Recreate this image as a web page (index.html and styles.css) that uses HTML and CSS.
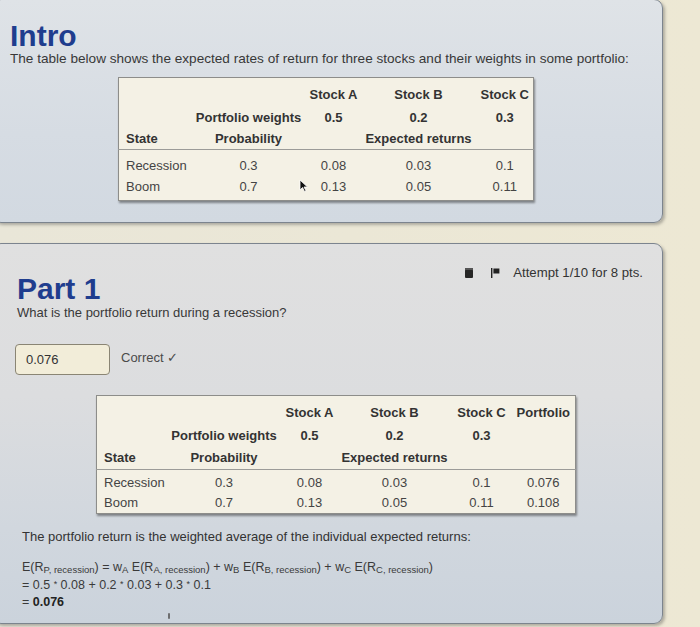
FILE: index.html
```html
<!DOCTYPE html>
<html>
<head>
<meta charset="utf-8">
<link rel="stylesheet" href="styles.css">
</head>
<body>
<div class="page">
  <section class="card card-intro">
    <h2 class="title">Intro</h2>
    <p class="lead">The table below shows the expected rates of return for three stocks and their weights in some portfolio:</p>
    <div class="table-wrap t1">
      <table class="data">
        <colgroup><col style="width:72px"><col style="width:116px"><col style="width:54px"><col style="width:116px"><col style="width:57px"></colgroup>
        <tr class="r1"><th></th><th></th><th>Stock A</th><th>Stock B</th><th>Stock C</th></tr>
        <tr class="r2"><th></th><th>Portfolio weights</th><th>0.5</th><th>0.2</th><th>0.3</th></tr>
        <tr class="r3"><th class="left">State</th><th>Probability</th><th></th><th>Expected returns</th><th></th></tr>
        <tr class="r4"><td class="left">Recession</td><td>0.3</td><td>0.08</td><td>0.03</td><td>0.1</td></tr>
        <tr class="r5"><td class="left">Boom</td><td>0.7</td><td>0.13</td><td>0.05</td><td>0.11</td></tr>
      </table>
      <svg class="cursor" width="9" height="13" viewBox="0 0 9 13"><path d="M1 1 L1 11 L3.5 8.5 L5.5 12.5 L7 11.8 L5 8 L8.5 8 Z" fill="#111" stroke="#fff" stroke-width="0.8"/></svg>
    </div>
  </section>

  <section class="card card-part">
    <div class="part-head">
      <h2 class="title part-title">Part 1</h2>
      <div class="attempt">
        <span class="ico-calc"></span>
        <svg class="ico-flag" width="9" height="10" viewBox="0 0 9 10"><rect x="0" y="0" width="1.4" height="10" fill="#222"/><rect x="2.4" y="0.5" width="6" height="5" fill="#222"/></svg>
        <span>Attempt 1/10 for 8 pts.</span>
      </div>
    </div>
    <p class="question">What is the portfolio return during a recession?</p>
    <div class="answer">
      <div class="answer-box">0.076</div>
      <span class="correct">Correct ✓</span>
    </div>
    <div class="table-wrap t2">
      <table class="data">
        <colgroup><col style="width:70px"><col style="width:115px"><col style="width:56px"><col style="width:114px"><col style="width:60px"><col style="width:64px"></colgroup>
        <tr class="r1"><th></th><th></th><th>Stock A</th><th>Stock B</th><th>Stock C</th><th>Portfolio</th></tr>
        <tr class="r2"><th></th><th>Portfolio weights</th><th>0.5</th><th>0.2</th><th>0.3</th><th></th></tr>
        <tr class="r3"><th class="left">State</th><th>Probability</th><th></th><th>Expected returns</th><th></th><th></th></tr>
        <tr class="r4"><td class="left">Recession</td><td>0.3</td><td>0.08</td><td>0.03</td><td>0.1</td><td>0.076</td></tr>
        <tr class="r5"><td class="left">Boom</td><td>0.7</td><td>0.13</td><td>0.05</td><td>0.11</td><td>0.108</td></tr>
      </table>
    </div>
    <p class="explain">The portfolio return is the weighted average of the individual expected returns:</p>
    <div class="formula">
      <div>E(R<sub>P, recession</sub>) = w<sub>A</sub> E(R<sub>A, recession</sub>) + w<sub>B</sub> E(R<sub>B, recession</sub>) + w<sub>C</sub> E(R<sub>C, recession</sub>)</div>
      <div>= 0.5 <span class="mul">*</span> 0.08 + 0.2 <span class="mul">*</span> 0.03 + 0.3 <span class="mul">*</span> 0.1</div>
      <div>= <b>0.076</b></div>
      <span class="mark"></span>
    </div>
  </section>
</div>
</body>
</html>
```

FILE: styles.css
```css
html, body {
  margin: 0;
  padding: 0;
}
body {
  width: 700px;
  height: 627px;
  overflow: hidden;
  background: linear-gradient(90deg, #e9e6d8 0%, #ede8d4 100%);
  font-family: "Liberation Sans", Arial, sans-serif;
  color: #3a3a3a;
}
.page {
  width: 671px;
  margin-left: -8px;
}
.card {
  border: 1px solid #7c848e;
  border-radius: 9px;
  box-shadow: 2px 2px 3px rgba(60, 60, 60, 0.35);
  padding-left: 17px;
  padding-right: 19px;
}
.card-intro {
  margin-top: -1px;
  padding-top: 21px;
  padding-bottom: 21px;
  background: linear-gradient(180deg, #dfe3e7 0%, #d6dce3 60%, #d2d9e1 100%);
}
.card-part {
  margin-top: 20px;
  padding-top: 21px;
  padding-left: 24px;
  padding-bottom: 12px;
  background: linear-gradient(180deg, #e0e0e0 0%, #dcdddf 40%, #d1d7de 75%, #cbd3dc 100%);
}
.title {
  margin: 0;
  font-size: 30px;
  line-height: 30px;
  font-weight: bold;
  color: #1f3d8e;
}
.lead {
  margin: 0;
  font-size: 13.6px;
  line-height: 16px;
  white-space: nowrap;
  color: #383838;
}
.table-wrap {
  position: relative;
  width: max-content;
}
.t1 {
  margin: 10px 0 0 108px;
}
.t2 {
  margin: 20px 0 0 79px;
}
.data {
  border-collapse: collapse;
  table-layout: fixed;
  background: #f4f1e5;
  border: 1px solid #8d8d8a;
  box-shadow: 1px 2px 2px rgba(0, 0, 0, 0.4);
  font-size: 13px;
  line-height: 16px;
  color: #444;
}
.data th, .data td {
  padding: 0;
  text-align: center;
  white-space: nowrap;
}
.data th {
  font-weight: bold;
  color: #333;
}
.data .left {
  text-align: left;
  padding-left: 7px;
}
.data .r1 { height: 29px; }
.data .r1 th { padding-top: 6px; }
.data .r2 { height: 23px; }
.data .r3 { height: 20px; }
.data .r3 th { border-bottom: 1px solid #9b9b98; }
.data .r4 { height: 27px; }
.data .r4 td { padding-top: 5px; }
.data .r5 { height: 24px; }
.data .r5 td { padding-bottom: 3px; }
.t2 .data .r3 { height: 22px; }
.t2 .data .r4 { height: 24px; }
.t2 .data .r4 td { padding-top: 3px; }
.t2 .data .r5 { height: 20px; }
.t2 .data .r5 td { padding-bottom: 0; }
.cursor {
  position: absolute;
  left: 181px;
  top: 102px;
}
.part-head {
  display: flex;
  justify-content: space-between;
  align-items: flex-start;
}
.part-title {
  margin-top: 9px;
}
.attempt {
  display: flex;
  align-items: center;
  font-size: 13.2px;
  line-height: 16px;
  color: #333;
}
.ico-calc {
  display: inline-block;
  width: 8px;
  height: 10px;
  background: #262626;
  border-radius: 1px;
  box-shadow: inset 0 2px 0 #555;
  margin-right: 18px;
}
.ico-flag {
  margin-right: 13px;
}
.question {
  margin: 1px 0 0;
  font-size: 13px;
  line-height: 16px;
  color: #383838;
}
.answer {
  margin-top: 23px;
  margin-left: -2px;
  display: flex;
  align-items: center;
}
.answer-box {
  box-sizing: border-box;
  width: 95px;
  height: 31px;
  padding-left: 10px;
  display: flex;
  align-items: center;
  background: #f2edd9;
  border: 1px solid #8a8574;
  border-radius: 4px;
  font-size: 13px;
  color: #333;
}
.correct {
  margin-left: 11px;
  margin-top: -4px;
  font-size: 13px;
  color: #4a4a4a;
}
.explain {
  margin: 15px 0 0 5px;
  font-size: 13px;
  line-height: 16px;
  color: #333;
}
.formula {
  position: relative;
  margin: 14px 0 0 5px;
  font-size: 12.5px;
  line-height: 17px;
  color: #3a3a3a;
}
.formula sub {
  font-size: 9.5px;
  vertical-align: -2px;
  line-height: 0;
}
.formula b {
  color: #222;
}
.mul {
  font-size: 9px;
  vertical-align: 2px;
}
.mark {
  position: absolute;
  left: 146px;
  top: 54px;
  width: 2px;
  height: 6px;
  background: #555;
  border-radius: 1px;
  opacity: 0.8;
}
```
